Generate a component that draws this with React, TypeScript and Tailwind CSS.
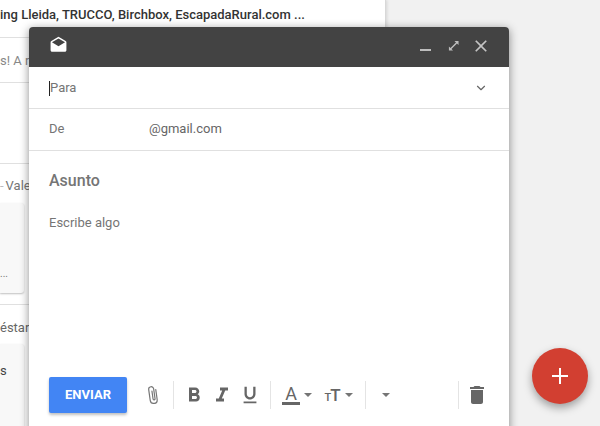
import { ChevronDown } from 'lucide-react';
import {
  MdClose,
  MdDelete,
  MdDrafts,
  MdFormatBold,
  MdFormatItalic,
  MdFormatUnderlined,
} from 'react-icons/md';

const Caret = ({ className = '' }: { className?: string }) => (
  <svg width="8" height="4" viewBox="0 0 8 4" className={className}>
    <path d="M0 0h8L4 4z" fill="#757575" />
  </svg>
);

const Divider = ({ className = '' }: { className?: string }) => (
  <div className={`w-px h-[28px] bg-[#e4e4e4] ${className}`} />
);

const ToolIcon = ({ children, className = '' }: { children: React.ReactNode; className?: string }) => (
  <div className={`w-[24px] h-[24px] flex items-center justify-center ${className}`}>{children}</div>
);

export default function App() {
  return (
    <div className="relative w-[600px] h-[426px] overflow-hidden bg-[#f1f1f1] font-['Roboto',sans-serif]">
      {/* Inbox behind the compose window */}
      <div className="w-[386px] h-[426px] bg-white border-r border-[#d8d8d8] shadow-[1px_0_3px_rgba(0,0,0,0.12)] text-[13px] text-[#757575]">
        <div className="h-[38px] border-b border-[#e0e0e0] whitespace-nowrap pt-[5px] font-medium text-[#333]">
          ing Lleida, TRUCCO, Birchbox, EscapadaRural.com ...
        </div>
        <div className="h-[45px] border-b border-[#e0e0e0] pt-[13px] whitespace-nowrap">
          <span className="text-[#888]">s! A r</span>
        </div>
        <div className="h-[81px] border-b border-[#e0e0e0]" />
        <div className="h-[141px] border-b border-[#e0e0e0] pt-[12px] whitespace-nowrap">
          <div className="h-[27px]"><span className="text-[#bbb] mr-[2px]">-</span>Vale</div>
          <div className="w-[24px] h-[90px] bg-[#f8f8f8] rounded-r-[3px] shadow-[0_1px_2px_rgba(0,0,0,0.25)] flex items-end pb-[14px] text-[10px] leading-none">...</div>
        </div>
        <div className="pt-[13px] whitespace-nowrap">
          <div className="h-[26px] text-[#666]">éstar</div>
          <div className="w-[24px] h-[90px] bg-[#f8f8f8] rounded-r-[3px] shadow-[0_1px_2px_rgba(0,0,0,0.25)] pt-[17px] text-[#444]">s</div>
        </div>
      </div>

      {/* Compose window */}
      <div className="absolute left-[29px] top-[27px] w-[480px] h-[420px] bg-white rounded-t-[4px] shadow-[0_2px_10px_rgba(0,0,0,0.45)] flex flex-col">
        <div className="h-[40px] shrink-0 bg-[#434343] rounded-t-[4px] flex items-center pl-[20px] pr-[16px]">
          <MdDrafts size={19} color="#fff" className="mt-[-4px]" />
          <div className="ml-auto flex items-center gap-[4px]">
            <ToolIcon>
              <div className="w-[11px] h-[2px] bg-[#bdbdbd] mt-[6px]" />
            </ToolIcon>
            <ToolIcon>
              <svg width="11" height="11" viewBox="0 0 12 12" fill="#bdbdbd" className="mt-[-3px]">
                <path d="M7 1h4.500v4.500L9.800 3.800 3.800 9.800 5.500 11.500H1V7l1.700 1.700 6-6z" />
              </svg>
            </ToolIcon>
            <ToolIcon>
              <MdClose size={20} color="#c4c4c4" className="mt-[-3px]" />
            </ToolIcon>
          </div>
        </div>

        <div className="h-[42px] shrink-0 border-b border-[#e0e0e0] flex items-center pl-[20px] pr-[21px] text-[13px] text-[#757575]">
          <div className="w-px h-[15px] bg-[#222] mt-[1px]" />
          <span>Para</span>
          <ChevronDown size={14} strokeWidth={2} color="#666" className="ml-auto" />
        </div>

        <div className="h-[42px] shrink-0 border-b border-[#e0e0e0] flex items-center pl-[20px] pb-[1px] text-[13px] text-[#757575]">
          <span className="w-[100px]">De</span>
          <span className="text-[#666]">@gmail.com</span>
        </div>

        <div className="pl-[20px] pt-[20px] text-[16px] leading-[20px] font-medium text-[#757575]">Asunto</div>
        <div className="pl-[20px] pt-[22px] text-[13px] leading-[20px] text-[#757575]">Escribe algo</div>

        <div className="absolute left-0 right-0 top-[350px] h-[36px] flex items-center pl-[20px]">
          <div className="w-[78px] h-[36px] bg-[#4285f4] rounded-[2px] shadow-[0_2px_3px_rgba(0,0,0,0.25)] flex items-center justify-center text-white text-[13px] font-bold">
            ENVIAR
          </div>
          <ToolIcon className="ml-[14px]">
            <svg width="10" height="20" viewBox="0 0 10 20" fill="none" stroke="#757575" strokeWidth="1.2" strokeLinecap="round" className="rotate-[-8deg]">
              <path d="M8.500 5v10a3.500 3.500 0 0 1-7 0V4a2.500 2.500 0 0 1 5 0v10a1 1 0 0 1-2 0V6" />
            </svg>
          </ToolIcon>
          <Divider className="ml-[8px]" />
          <ToolIcon className="ml-[8px]"><MdFormatBold size={25} color="#666" /></ToolIcon>
          <ToolIcon className="ml-[4px]"><MdFormatItalic size={25} color="#666" /></ToolIcon>
          <ToolIcon className="ml-[4px]"><MdFormatUnderlined size={22} color="#666" /></ToolIcon>
          <Divider className="ml-[8px]" />
          <ToolIcon className="ml-[8px]">
            <span className="w-[18px] text-center text-[18px] leading-[17px] text-[#666] border-b-[3px] border-[#666]">A</span>
          </ToolIcon>
          <Caret className="ml-[1px]" />
          <ToolIcon className="ml-[8px]">
            <span className="text-[#666] font-medium text-[17px] leading-none whitespace-nowrap tracking-[-1px]">
              <span className="text-[11px]">T</span>T
            </span>
          </ToolIcon>
          <Caret className="ml-[1px]" />
          <Divider className="ml-[12px]" />
          <Caret className="ml-[16px]" />
          <Divider className="ml-[68px]" />
          <ToolIcon className="ml-[6px]"><MdDelete size={24} color="#666" /></ToolIcon>
        </div>
      </div>

      {/* Floating compose button */}
      <div className="absolute left-[532px] top-[348px] w-[56px] h-[56px] rounded-full bg-[#d23f31] shadow-[0_4px_8px_rgba(0,0,0,0.35)] flex items-center justify-center">
        <svg width="16" height="16" viewBox="0 0 16 16" fill="#fff">
          <path d="M7 0h2v7h7v2H9v7H7V9H0V7h7z" />
        </svg>
      </div>
    </div>
  );
}
